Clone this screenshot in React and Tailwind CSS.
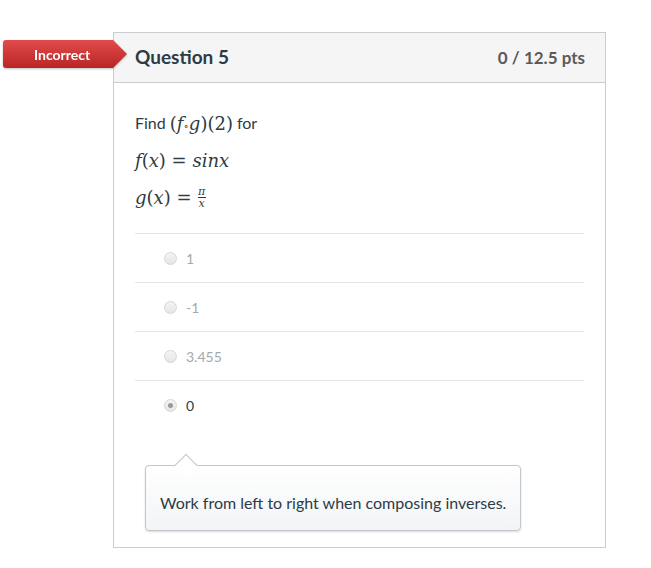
import React from 'react';

const Radio = ({ checked }) => (
  <span className="relative inline-flex h-[13px] w-[13px] items-center justify-center rounded-full border border-[#d6d6d6] bg-gradient-to-b from-[#f4f4f4] to-[#e6e6e6]">
    {checked && <span className="h-[5px] w-[5px] rounded-full bg-[#9a9a9a]" />}
  </span>
);

const answers = [
  { text: '1', checked: false },
  { text: '-1', checked: false },
  { text: '3.455', checked: false },
  { text: '0', checked: true },
];

const mathFont = { fontFamily: '"DejaVu Serif", "Liberation Serif", serif' };

export default function App() {
  return (
    <div className="relative h-[568px] w-[651px] bg-white font-['Lato',sans-serif]">
      <div className="absolute left-[113px] top-[32px] w-[493px] border border-[#c7cdd1]">
        <div className="flex h-[50px] items-center justify-between border-b border-[#c7cdd1] bg-[#f5f5f5] pl-[21px] pr-[20px]">
          <h2 className="text-[19px] font-bold text-[#2d3b45]">Question 5</h2>
          <span className="text-[17px] font-bold text-[#5a5a5a]">0 / 12.5 pts</span>
        </div>
        <div className="px-[21px] pb-[16px] pt-[28px]">
          <div className="text-[16px] text-[#2d3b45]">
            <div className="flex h-[24px] items-center gap-[4px]">
              <span>Find</span>
              <span className="text-[18px]" style={mathFont}>
                (<i>f</i>
                <span className="text-[11px]">∘</span>
                <i>g</i>)(2)
              </span>
              <span>for</span>
            </div>
            <div className="mt-[13px] flex h-[24px] items-center text-[18px]" style={mathFont}>
              <span>
                <i>f</i>(<i>x</i>) = <i>sinx</i>
              </span>
            </div>
            <div className="mt-[13px] flex h-[24px] items-center text-[18px]" style={mathFont}>
              <span>
                <i>g</i>(<i>x</i>) =
              </span>
              <span className="ml-[6px] inline-flex flex-col items-center text-[11px] leading-[11px]">
                <i>π</i>
                <span className="h-px w-[8px] bg-[#2d3b45]" />
                <i>x</i>
              </span>
            </div>
          </div>
          <div className="mt-[24px]">
            {answers.map((a) => (
              <div key={a.text} className="flex h-[49px] items-center border-t border-[#e5e5e5] pl-[29px]">
                <Radio checked={a.checked} />
                <span className={`ml-[9px] text-[14px] ${a.checked ? 'text-[#2d3b45]' : 'text-[#a5a9ac]'}`}>
                  {a.text}
                </span>
              </div>
            ))}
          </div>
          <div className="relative ml-[10px] mt-[36px] w-[376px] rounded-[4px] border border-[#c1c7cc] bg-gradient-to-b from-white to-[#f2f4f6] px-[14px] pb-[15px] pt-[25px] shadow-[0_1px_2px_rgba(0,0,0,0.15)]">
            <div className="absolute left-[32px] top-[-9px] h-[16px] w-[16px] rotate-45 border-l border-t border-[#c1c7cc] bg-white" />
            <p className="relative whitespace-nowrap text-[16px] text-[#2d3b45]">Work from left to right when composing inverses.</p>
          </div>
        </div>
      </div>
      <div className="absolute left-[3px] top-[40px] flex h-[28px] w-[124px] items-center drop-shadow-[0_1px_1px_rgba(0,0,0,0.25)]">
        <div className="flex h-full w-full items-center rounded-l-[3px] bg-gradient-to-b from-[#e24b4b] to-[#b92424] pl-[31px] [clip-path:polygon(0_0,110px_0,124px_50%,110px_100%,0_100%)]">
          <span className="text-[14px] font-bold text-white">Incorrect</span>
        </div>
      </div>
    </div>
  );
}
